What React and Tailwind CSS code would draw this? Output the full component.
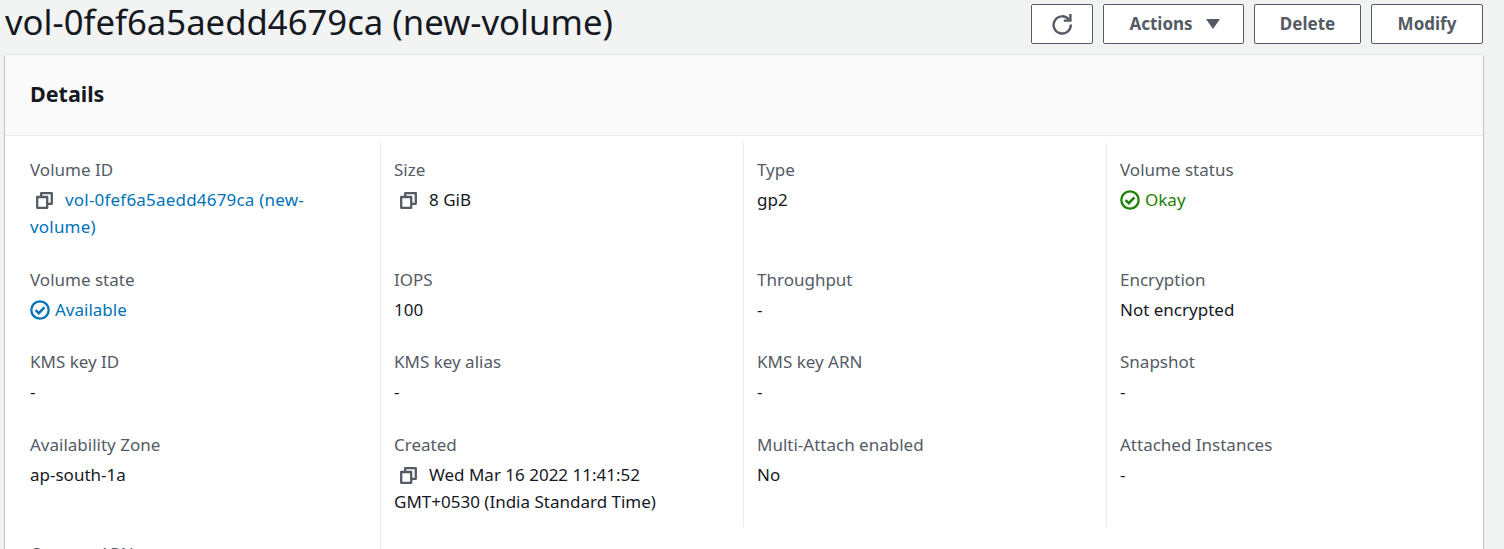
const columns = [
  [
    { label: "Volume ID", value: "vol-0fef6a5aedd4679ca (new-volume)", copy: true, tone: "link" },
    { label: "Volume state", value: "Available", status: "info" },
    { label: "KMS key ID", value: "-" },
    { label: "Availability Zone", value: "ap-south-1a" },
  ],
  [
    { label: "Size", value: "8 GiB", copy: true },
    { label: "IOPS", value: "100" },
    { label: "KMS key alias", value: "-" },
    { label: "Created", value: "Wed Mar 16 2022 11:41:52 GMT+0530 (India Standard Time)", copy: true },
  ],
  [
    { label: "Type", value: "gp2" },
    { label: "Throughput", value: "-" },
    { label: "KMS key ARN", value: "-" },
    { label: "Multi-Attach enabled", value: "No" },
  ],
  [
    { label: "Volume status", value: "Okay", status: "ok" },
    { label: "Encryption", value: "Not encrypted" },
    { label: "Snapshot", value: "-" },
    { label: "Attached Instances", value: "-" },
  ],
];

function CopyIcon() {
  return (
    <svg viewBox="0 0 17 17" className="mr-[12px] ml-[6px] inline-block h-[17px] w-[17px] align-[-3px]" fill="none" stroke="#545b64" strokeWidth="2.3" strokeLinejoin="round">
      <rect x="1.2" y="5" width="10" height="10.8" />
      <path d="M5.2 5V1.2h10.6v10.6h-4.6" />
    </svg>
  );
}

function StatusIcon({ color }) {
  return (
    <svg viewBox="0 0 20 20" className="mr-[5px] h-5 w-5 shrink-0" fill="none" stroke={color} strokeWidth="2.3">
      <circle cx="10" cy="10" r="8.7" />
      <path d="M5.6 10.1l3.2 3.1 5.6-5.8" strokeWidth="2.5" />
    </svg>
  );
}

function RefreshIcon() {
  return (
    <svg viewBox="0 0 22 22" className="h-[22px] w-[22px]" fill="none" stroke="#545b64" strokeWidth="2.4">
      <path d="M17.8 6.4A8.6 8.6 0 1 0 19.8 11.5" />
      <path d="M19.4 1v6.6h-6.6" />
    </svg>
  );
}

function Field({ item, row, col }) {
  let value;
  if (item.status) {
    const color = item.status === "ok" ? "#1d8102" : "#0073bb";
    value = (
      <div className="flex items-center leading-[27px]" style={{ color }}>
        <StatusIcon color={color} />
        {item.value}
      </div>
    );
  } else {
    value = (
      <div className={`pr-[10px] leading-[27px] ${item.tone === "link" ? "tracking-[0.2px] text-[#0073bb]" : "text-[#16191f]"}`}>
        {item.copy && <CopyIcon />}
        {item.value}
      </div>
    );
  }
  return (
    <div className={`px-[13px] ${row === 0 ? "pt-[16px]" : "pt-[14px]"} ${col < 3 ? "border-r border-[#eaeded]" : ""}`}>
      <div className="mb-[6px] leading-[21px] text-[#545b64]">{item.label}</div>
      {value}
    </div>
  );
}

function Button({ children, className }) {
  return (
    <button className={`flex h-[40px] items-center justify-center rounded-[2px] border border-[#545b64] bg-white font-bold text-[#545b64] ${className}`}>
      {children}
    </button>
  );
}

export default function App() {
  return (
    <div className="h-[549px] overflow-hidden bg-[#f2f3f3] font-['Noto_Sans',sans-serif] text-[17px]">
      <div className="flex h-[55px] items-start justify-between pr-[21px] pl-[5px]">
        <h1 className="text-[34.7px] leading-[44px] text-[#16191f]">vol-0fef6a5aedd4679ca (new-volume)</h1>
        <div className="flex gap-[10px] pt-[4px]">
          <Button className="w-[62px]"><RefreshIcon /></Button>
          <Button className="w-[141px] gap-[13px] pl-[2px]">
            Actions
            <svg viewBox="0 0 14 10" className="h-[10px] w-[14px]" fill="#545b64"><path d="M0 0h14L7 10z" /></svg>
          </Button>
          <Button className="w-[107px]">Delete</Button>
          <Button className="w-[112px]">Modify</Button>
        </div>
      </div>
      <div className="mr-[21px] ml-[5px] h-[600px] bg-white shadow-[0_-1px_0_0_rgba(0,28,36,0.05),0_1px_1px_0_rgba(0,28,36,0.3),1px_1px_1px_0_rgba(0,28,36,0.15),-1px_1px_1px_0_rgba(0,28,36,0.15)]">
        <div className="flex h-[81px] items-center border-b border-[#eaeded] bg-[#fafafa] pb-[2px] pl-[25px] text-[21.5px] leading-[28px] font-bold text-[#16191f]">
          Details
        </div>
        <div className="grid grid-cols-[364px_363px_363px_363px] grid-rows-[112px_82px_83px_107px_100px] pt-[7px] pl-[12px]">
          {[0, 1, 2, 3].map((row) =>
            columns.map((column, col) => <Field key={`${row}-${col}`} item={column[row]} row={row} col={col} />)
          )}
          <div className="border-r border-[#eaeded] px-[13px] pt-[16px] leading-[21px] text-[#545b64]">Outpost ARN</div>
        </div>
      </div>
    </div>
  );
}
